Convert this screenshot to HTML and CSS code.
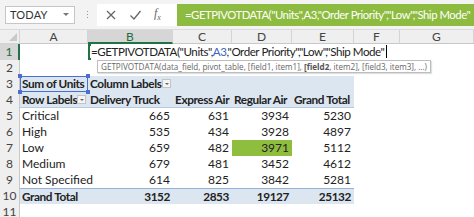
FILE: index.html
```html
<!DOCTYPE html>
<html>
<head>
<meta charset="utf-8">
<link rel="stylesheet" href="styles.css">
</head>
<body>
<div class="app">
  <div class="toolbar">
    <div class="namebox"><span class="nb-text">TODAY</span><span class="nb-arrow"></span></div>
    <div class="grip"><i></i><i></i><i></i></div>
    <div class="fxbtns">
      <svg class="ico" width="12" height="12" viewBox="0 0 12 12"><path d="M2 2 L10 10 M10 2 L2 10" stroke="#666" stroke-width="1.3" fill="none"/></svg>
      <svg class="ico" width="13" height="12" viewBox="0 0 13 12"><path d="M1.5 6.5 L5 10 L11.5 2" stroke="#666" stroke-width="1.3" fill="none"/></svg>
      <span class="fx">f<sub>x</sub></span>
    </div>
    <div class="formula">=GETPIVOTDATA("Units",A3,"Order Priority","Low","Ship Mode"</div>
  </div>
  <div class="sheet">
    <div class="corner"><span class="tri"></span></div>
    <div class="ch">A</div>
    <div class="ch sel">B</div>
    <div class="ch">C</div>
    <div class="ch">D</div>
    <div class="ch">E</div>
    <div class="ch">F</div>
    <div class="ch">G</div>

    <div class="rh sel">1</div>
    <div class="c"></div>
    <div class="c active"><span class="edit">=GETPIVOTDATA("Units",<span class="ref">A3</span>,"Order Priority","Low","Ship Mode"<span class="caret"></span></span></div>
    <div class="c"></div><div class="c"></div><div class="c"></div><div class="c"></div><div class="c"></div>

    <div class="rh">2</div>
    <div class="c"></div><div class="c tipcell"><div class="tip">GETPIVOTDATA(data_field, pivot_table, [field1, item1], <b>[field2</b>, item2], [field3, item3], ...)</div></div>
    <div class="c"></div><div class="c"></div><div class="c"></div><div class="c"></div><div class="c"></div>

    <div class="rh">3</div>
    <div class="c pv b refbox">Sum of Units<span class="sq s1"></span><span class="sq s2"></span><span class="sq s3"></span><span class="sq s4"></span></div>
    <div class="c pv b">Column Labels<span class="dd"></span></div>
    <div class="c pv"></div><div class="c pv"></div><div class="c pv"></div>
    <div class="c"></div><div class="c"></div>

    <div class="rh">4</div>
    <div class="c pv b hd">Row Labels<span class="dd"></span></div>
    <div class="c pv b hd">Delivery Truck</div>
    <div class="c pv b hd">Express Air</div>
    <div class="c pv b hd">Regular Air</div>
    <div class="c pv b hd">Grand Total</div>
    <div class="c"></div><div class="c"></div>

    <div class="rh">5</div>
    <div class="c">Critical</div><div class="c n">665</div><div class="c n">631</div><div class="c n">3934</div><div class="c n">5230</div><div class="c"></div><div class="c"></div>
    <div class="rh">6</div>
    <div class="c">High</div><div class="c n">535</div><div class="c n">434</div><div class="c n">3928</div><div class="c n">4897</div><div class="c"></div><div class="c"></div>
    <div class="rh">7</div>
    <div class="c">Low</div><div class="c n">659</div><div class="c n">482</div><div class="c n hl">3971</div><div class="c n">5112</div><div class="c"></div><div class="c"></div>
    <div class="rh">8</div>
    <div class="c">Medium</div><div class="c n">679</div><div class="c n">481</div><div class="c n">3452</div><div class="c n">4612</div><div class="c"></div><div class="c"></div>
    <div class="rh">9</div>
    <div class="c">Not Specified</div><div class="c n">614</div><div class="c n">825</div><div class="c n">3842</div><div class="c n">5281</div><div class="c"></div><div class="c"></div>
    <div class="rh">10</div>
    <div class="c pv b tot">Grand Total</div><div class="c pv b n tot">3152</div><div class="c pv b n tot">2853</div><div class="c pv b n tot">19127</div><div class="c pv b n tot">25132</div><div class="c"></div><div class="c"></div>
    <div class="rh">11</div>
    <div class="c"></div><div class="c"></div><div class="c"></div><div class="c"></div><div class="c"></div><div class="c"></div><div class="c"></div>
  </div>
</div>
</body>
</html>
```

FILE: styles.css
```css
html, body {
  margin: 0;
  padding: 0;
  background: #ffffff;
}
.app {
  width: 474px;
  height: 217px;
  overflow: hidden;
  font-family: "Lato", "Liberation Sans", sans-serif;
  color: #222;
}
.toolbar {
  height: 30px;
  background: #f3f3f3;
  display: flex;
  align-items: center;
  box-sizing: border-box;
  border-bottom: 1px solid #dadada;
}
.namebox {
  margin-left: 5px;
  width: 70px;
  height: 18px;
  box-sizing: border-box;
  border: 1px solid #c6c6c6;
  background: #fff;
  display: flex;
  align-items: center;
  justify-content: space-between;
  padding: 0 5px 0 4px;
}
.nb-text {
  font-size: 11px;
  color: #333;
  letter-spacing: 0.2px;
}
.nb-arrow {
  width: 0;
  height: 0;
  border-left: 3px solid transparent;
  border-right: 3px solid transparent;
  border-top: 3px solid #777;
}
.grip {
  margin-left: 12px;
  display: flex;
  flex-direction: column;
  gap: 2px;
}
.grip i {
  display: block;
  width: 1px;
  height: 1px;
  background: #999;
}
.fxbtns {
  margin-left: 9px;
  width: 80px;
  height: 22px;
  background: #fff;
  display: flex;
  align-items: center;
  gap: 12px;
  padding-left: 8px;
  box-sizing: border-box;
}
.fx {
  font-family: "Liberation Serif", serif;
  font-style: italic;
  font-size: 12px;
  color: #666;
}
.fx sub {
  font-size: 8px;
}
.formula {
  flex: 1;
  height: 22px;
  background: #8dbb3f;
  color: #fff;
  font-size: 11.3px;
  letter-spacing: -0.45px;
  display: flex;
  align-items: center;
  padding-left: 8px;
  white-space: nowrap;
  overflow: hidden;
}
.sheet {
  display: grid;
  grid-template-columns: 20px 68px 85px 59px 60px 62px 46px 74px;
  grid-template-rows: 14px repeat(11, 16px);
  font-size: 12px;
}
.corner {
  background: #efefef;
  border-right: 1px solid #d4d4d4;
  border-bottom: 1px solid #d4d4d4;
  box-sizing: border-box;
  position: relative;
}
.tri {
  position: absolute;
  right: 2px;
  bottom: 2px;
  width: 0;
  height: 0;
  border-left: 8px solid transparent;
  border-bottom: 8px solid #c9c9c9;
}
.ch {
  background: #efefef;
  border-right: 1px solid #d4d4d4;
  border-bottom: 1px solid #c8c8c8;
  box-sizing: border-box;
  text-align: center;
  line-height: 13px;
  font-size: 12px;
  color: #444;
}
.ch.sel {
  background: #d6d6d6;
  border-bottom: 2px solid #217346;
  color: #1e6b3e;
}
.rh {
  background: #efefef;
  border-right: 1px solid #c8c8c8;
  box-sizing: border-box;
  text-align: center;
  line-height: 15px;
  font-size: 12px;
  color: #444;
}
.rh.sel {
  background: #d6d6d6;
  border-right: 2px solid #217346;
  color: #1e6b3e;
}
.c {
  line-height: 16px;
  padding: 0 3px 0 2px;
  white-space: nowrap;
  position: relative;
  box-sizing: border-box;
}
.b {
  font-weight: bold;
  font-size: 11.8px;
  letter-spacing: -0.4px;
}
.n { text-align: right; }
.pv { background: #dce6f1; }
.hd { border-bottom: 1px solid #b4c9e4; line-height: 15px; }
.tot { border-top: 1px solid #95b3d7; line-height: 15px; }
.hl { background: #8fbd3e; }
.active {
  border: 2px solid #217346;
  border-right: none;
  overflow: visible;
  z-index: 2;
}
.edit {
  position: absolute;
  left: 1px;
  top: -2px;
  background: #fff;
  padding-right: 2px;
  font-size: 11.6px;
  letter-spacing: -0.45px;
}
.ref { color: #3b63c4; }
.caret {
  display: inline-block;
  width: 1px;
  height: 13px;
  background: #000;
  vertical-align: -2px;
  margin-left: 2px;
}
.tipcell { overflow: visible; z-index: 3; }
.tip {
  position: absolute;
  left: 9px;
  top: 0;
  height: 13px;
  line-height: 12px;
  box-sizing: border-box;
  border: 1px solid #bdbdbd;
  background: #fff;
  color: #666;
  font-family: "Open Sans", "Liberation Sans", sans-serif;
  font-size: 8.1px;
  padding: 0 3px;
  white-space: nowrap;
  box-shadow: 1px 1px 1px rgba(0,0,0,0.12);
}
.tip b { color: #555; }
.dd {
  position: absolute;
  right: 2px;
  top: 3px;
  width: 9px;
  height: 9px;
  box-sizing: border-box;
  border: 1px solid #c4c4c4;
  background: #f4f4f4;
}
.dd::after {
  content: "";
  position: absolute;
  left: 1.5px;
  top: 3px;
  border-left: 2.5px solid transparent;
  border-right: 2.5px solid transparent;
  border-top: 2.5px solid #666;
}
.refbox {
  outline: 1px solid #4a6fd0;
  outline-offset: -1px;
  z-index: 2;
}
.sq {
  position: absolute;
  width: 4px;
  height: 4px;
  background: #4a6fd0;
}
.s1 { left: -2px; top: -2px; }
.s2 { right: -2px; top: -2px; }
.s3 { left: -2px; bottom: -2px; }
.s4 { right: -2px; bottom: -2px; }
```
